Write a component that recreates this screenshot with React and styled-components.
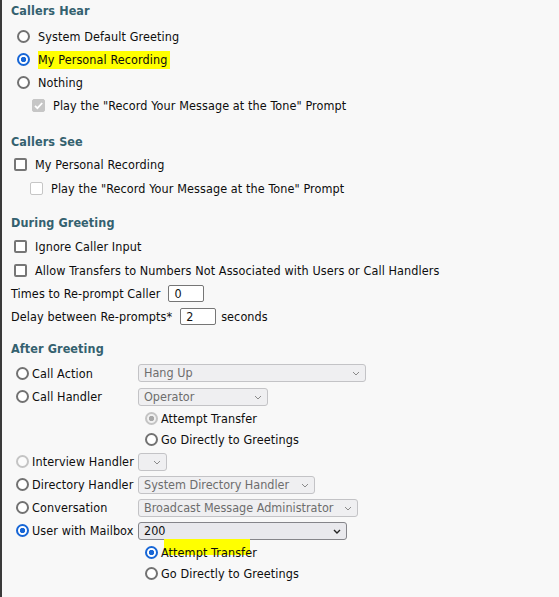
import React from 'react';
import styled, { css, createGlobalStyle } from 'styled-components';

const Global = createGlobalStyle`
  html, body { margin: 0; padding: 0; background: #f8f8f8; }
  body {
    font-family: "DejaVu Sans Condensed", "DejaVu Sans", sans-serif;
    font-size: 12.5px;
    letter-spacing: 0.1px;
    color: #0d0d0d;
  }
`;

const Page = styled.div`
  min-height: 597px;
  box-sizing: border-box;
  border-left: 2px solid #3a3a3a;
  padding-left: 9px;
`;

const Section = styled.section`
  margin-top: ${(p) => p.$top || 0}px;
`;

const Heading = styled.h3`
  margin: 0 0 ${(p) => p.$gap || 0}px 0;
  height: 22px;
  line-height: 22px;
  font-size: 12.5px;
  font-weight: bold;
  color: #34616f;
`;

const Row = styled.div`
  display: flex;
  align-items: center;
  height: ${(p) => p.$h || 23}px;
  padding-left: ${(p) => p.$indent || 0}px;
  white-space: nowrap;
`;

const Radio = styled.input.attrs({ type: 'radio' })`
  appearance: none;
  box-sizing: border-box;
  width: 13px;
  height: 13px;
  margin: 0 ${(p) => p.$mr ?? 3}px 0 ${(p) => p.$ml ?? 0}px;
  flex: none;
  border-radius: 50%;
  border: 2px solid #727272;
  background: #fff;
  &:checked {
    border-color: #1766d6;
    background: radial-gradient(circle at center, #1766d6 0 2.4px, #fff 3px);
  }
  &:disabled {
    border-color: #c4c4c4;
    background: #fbfbfb;
  }
  &:disabled:checked {
    border-color: #c4c4c4;
    background: radial-gradient(circle at center, #a8a8a8 0 2.4px, #f1f1f1 3px);
  }
`;

const CheckWrap = styled.span`
  position: relative;
  display: inline-block;
  flex: none;
  width: 13px;
  height: 13px;
  margin: 0 ${(p) => p.$mr ?? 8}px 0 ${(p) => p.$ml ?? 0}px;
`;

const CheckInput = styled.input.attrs({ type: 'checkbox' })`
  appearance: none;
  box-sizing: border-box;
  display: block;
  width: 13px;
  height: 13px;
  margin: 0;
  border-radius: 2px;
  border: 2px solid #767676;
  background: #fff;
  ${(p) =>
    p.disabled &&
    css`
      border-width: 1.5px;
      border-color: #c6c6c6;
    `}
  &:disabled:checked {
    border-color: #c6c6c6;
    background: #c6c6c6;
  }
`;

const Tick = styled.svg`
  position: absolute;
  left: 0;
  top: 0;
  width: 13px;
  height: 13px;
  pointer-events: none;
`;

function Check({ ml, mr, checked, disabled }) {
  return (
    <CheckWrap $ml={ml} $mr={mr}>
      <CheckInput defaultChecked={checked} disabled={disabled} />
      {checked && (
        <Tick viewBox="0 0 13 13">
          <path d="M3 6.8 L5.4 9.2 L10.2 4" fill="none" stroke="#fff" strokeWidth="1.8" />
        </Tick>
      )}
    </CheckWrap>
  );
}

const Marker = styled.span`
  background: #ffff00;
  padding: 3px 2px 3px 0;
  line-height: 12px;
`;

const MarkerTop = styled.span`
  position: relative;
  isolation: isolate;
  &::before {
    content: '';
    position: absolute;
    left: 3px;
    width: 86px;
    top: -6px;
    height: 16px;
    background: #ffff00;
    z-index: -1;
  }
`;

const Label = styled.span`
  display: inline-flex;
  align-items: center;
  width: ${(p) => (p.$w ? `${p.$w}px` : 'auto')};
  flex: none;
`;

const NumInput = styled.input.attrs({ type: 'text' })`
  box-sizing: border-box;
  width: 36px;
  height: 17px;
  margin: 0 ${(p) => p.$mr ?? 0}px 0 8px;
  padding: 0 0 0 5px;
  border: 1px solid #767676;
  border-radius: 2px;
  background: #fff;
  font: inherit;
  color: #111;
`;

const SelectBox = styled.span`
  position: relative;
  display: inline-block;
  flex: none;
  width: ${(p) => p.$w}px;
  height: 18px;
`;

const Select = styled.select`
  appearance: none;
  box-sizing: border-box;
  width: 100%;
  height: 100%;
  margin: 0;
  padding: 0 18px 0 5px;
  border: 1px solid ${(p) => (p.disabled ? '#c3c3c6' : '#85858a')};
  border-radius: 3px;
  background: ${(p) => (p.disabled ? '#efeff1' : '#e9e9ed')};
  color: ${(p) => (p.disabled ? '#6d6d6d' : '#111')};
  font: inherit;
  line-height: 16px;
  opacity: 1;
`;

const Chevron = styled.svg`
  position: absolute;
  right: 6px;
  top: 7px;
  width: 8px;
  height: 5px;
  pointer-events: none;
`;

function Dropdown({ w, value, disabled }) {
  return (
    <SelectBox $w={w}>
      <Select disabled={disabled} defaultValue={value}>
        <option value={value}>{value}</option>
      </Select>
      <Chevron viewBox="0 0 8 5">
        <path
          d="M1 1 L4 4 L7 1"
          fill="none"
          stroke={disabled ? '#8a8a8a' : '#222'}
          strokeWidth={disabled ? 1 : 1.4}
        />
      </Chevron>
    </SelectBox>
  );
}

const ACTION_W = 127;

function ActionRow({ label, checked, disabled, w, value, selDisabled = true, h = 23 }) {
  return (
    <Row $h={h}>
      <Label $w={ACTION_W}>
        <Radio name="after" $ml={5} $mr={3} defaultChecked={checked} disabled={disabled} />
        {label}
      </Label>
      <Dropdown w={w} value={value} disabled={selDisabled} />
    </Row>
  );
}

function SubRow({ name, checked, disabled, children }) {
  return (
    <Row $h={21} $indent={ACTION_W}>
      <Radio name={name} $ml={7} $mr={3} defaultChecked={checked} disabled={disabled} />
      {children}
    </Row>
  );
}

export default function App() {
  return (
    <>
      <Global />
      <Page>
        <Section>
          <Heading $gap={3}>Callers Hear</Heading>
          <Row>
            <Radio name="hear" $ml={6} $mr={8} />
            System Default Greeting
          </Row>
          <Row>
            <Radio name="hear" $ml={6} $mr={8} defaultChecked />
            <Marker>My Personal Recording</Marker>
          </Row>
          <Row>
            <Radio name="hear" $ml={6} $mr={8} />
            Nothing
          </Row>
          <Row>
            <Check ml={21} mr={8} checked disabled />
            Play the "Record Your Message at the Tone" Prompt
          </Row>
        </Section>

        <Section $top={14}>
          <Heading $gap={-1}>Callers See</Heading>
          <Row $h={24}>
            <Check ml={3} />
            My Personal Recording
          </Row>
          <Row $h={24}>
            <Check ml={19} disabled />
            Play the "Record Your Message at the Tone" Prompt
          </Row>
        </Section>

        <Section $top={12}>
          <Heading $gap={0}>During Greeting</Heading>
          <Row $h={24}>
            <Check ml={3} />
            Ignore Caller Input
          </Row>
          <Row $h={24}>
            <Check ml={3} />
            Allow Transfers to Numbers Not Associated with Users or Call Handlers
          </Row>
          <Row $h={23}>
            Times to Re-prompt Caller
            <NumInput defaultValue="0" />
          </Row>
          <Row $h={23}>
            Delay between Re-prompts*
            <NumInput defaultValue="2" $mr={5} />
            seconds
          </Row>
        </Section>

        <Section $top={10}>
          <Heading $gap={1.5}>After Greeting</Heading>
          <ActionRow label="Call Action" w={228} value="Hang Up" h={23.5} />
          <ActionRow label="Call Handler" w={130} value="Operator" />
          <SubRow name="ch" checked disabled>Attempt Transfer</SubRow>
          <SubRow name="ch">Go Directly to Greetings</SubRow>
          <ActionRow label="Interview Handler" w={29} value="" disabled />
          <ActionRow label="Directory Handler" w={177} value="System Directory Handler" />
          <ActionRow label="Conversation" w={220} value="Broadcast Message Administrator" />
          <ActionRow label="User with Mailbox" w={209} value="200" checked selDisabled={false} />
          <SubRow name="um" checked>
            <MarkerTop>Attempt Transfer</MarkerTop>
          </SubRow>
          <SubRow name="um">Go Directly to Greetings</SubRow>
        </Section>
      </Page>
    </>
  );
}
